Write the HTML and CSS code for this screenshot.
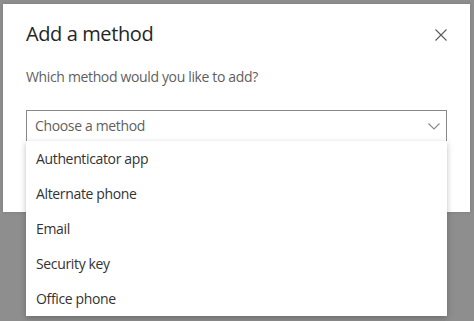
FILE: index.html
```html
<!DOCTYPE html>
<html lang="en">
<head>
    <meta charset="UTF-8">
    <title>Add a method</title>
    <link rel="stylesheet" href="styles.css">
</head>
<body>
    <div class="dialog">
        <div class="dialog-header">
            <h1 class="title">Add a method</h1>
            <button class="close" aria-label="Close">
                <svg width="12" height="12" viewBox="0 0 12 12">
                    <path d="M0.5 0.5 L11.5 11.5 M11.5 0.5 L0.5 11.5" stroke="#5a5a5a" stroke-width="1.1" fill="none"/>
                </svg>
            </button>
        </div>
        <p class="prompt">Which method would you like to add?</p>
        <div class="select">
            <div class="select-box">
                <span class="placeholder">Choose a method</span>
                <svg class="chevron" width="12" height="7" viewBox="0 0 12 7">
                    <path d="M0.5 0.5 L6 6 L11.5 0.5" stroke="#8a8886" stroke-width="1.1" fill="none"/>
                </svg>
            </div>
            <ul class="options">
                <li>Authenticator app</li>
                <li>Alternate phone</li>
                <li>Email</li>
                <li>Security key</li>
                <li>Office phone</li>
            </ul>
        </div>
    </div>
</body>
</html>
```

FILE: styles.css
```css
body {
    margin: 0;
    height: 321px;
    overflow: hidden;
    background: #8e8e8e;
    font-family: "Segoe UI", "Open Sans", sans-serif;
    letter-spacing: -0.35px;
}

.dialog {
    margin: 4px 0 0 3px;
    width: 467px;
    height: 208px;
    box-sizing: border-box;
    padding: 16px 23px 0 23px;
    background: #fff;
    box-shadow: 0 0 3px rgba(0, 0, 0, 0.15);
}

.dialog-header {
    display: flex;
    justify-content: space-between;
    align-items: flex-start;
}

.title {
    margin: 0;
    font-size: 20px;
    line-height: 28px;
    font-weight: 400;
    letter-spacing: -0.4px;
    color: #262626;
}

.close {
    margin-top: 9px;
    padding: 0;
    border: none;
    background: none;
    display: flex;
}

.prompt {
    margin: 19px 0 0 0;
    font-size: 14px;
    line-height: 20px;
    color: #5f5f5f;
}

.select {
    position: relative;
    margin-top: 23px;
}

.select-box {
    height: 32px;
    box-sizing: border-box;
    border: 1px solid #8a8886;
    padding: 0 6px 0 8px;
    display: flex;
    align-items: center;
    justify-content: space-between;
}

.placeholder {
    font-size: 14px;
    line-height: 20px;
    color: #5f5f5f;
}

.options {
    position: absolute;
    top: 31px;
    left: 0;
    right: 0;
    margin: 0;
    padding: 0;
    list-style: none;
    background: #fff;
    box-shadow: 0 2px 6px rgba(0, 0, 0, 0.25);
}

.options li {
    height: 35px;
    padding-left: 10px;
    display: flex;
    align-items: center;
    font-size: 14px;
    color: #333;
}
```
